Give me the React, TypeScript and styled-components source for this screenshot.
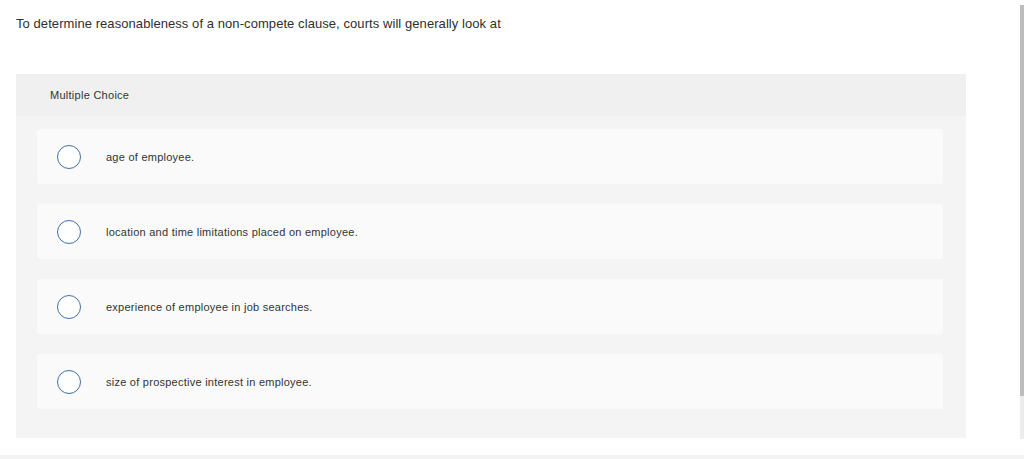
import React from "react";
import styled, { createGlobalStyle } from "styled-components";

const GlobalStyle = createGlobalStyle`
  html, body {
    margin: 0;
    padding: 0;
    background: #ffffff;
    font-family: "Liberation Sans", Arial, sans-serif;
    color: #333333;
  }
`;

const options = [
  "age of employee.",
  "location and time limitations placed on employee.",
  "experience of employee in job searches.",
  "size of prospective interest in employee.",
];

const App: React.FC = () => {
  return (
    <>
      <GlobalStyle />
      <Page>
        <Question>To determine reasonableness of a non-compete clause, courts will generally look at</Question>
        <Panel>
          <PanelHeader>Multiple Choice</PanelHeader>
          <OptionList>
            {options.map((text) => (
              <OptionCard key={text}>
                <Radio />
                <OptionText>{text}</OptionText>
              </OptionCard>
            ))}
          </OptionList>
        </Panel>
      </Page>
      <BottomEdge />
      <ScrollTrack>
        <ScrollThumb />
      </ScrollTrack>
    </>
  );
};

const Page = styled.div`
  width: 1024px;
  height: 455px;
  box-sizing: border-box;
  padding: 15px 0 0 16px;
`;

const Question = styled.div`
  font-size: 13px;
  line-height: 18px;
  letter-spacing: 0.07px;
  color: #2f2f2f;
  margin-bottom: 41px;
`;

const Panel = styled.div`
  width: 950px;
  background-color: #f4f4f4;
`;

const PanelHeader = styled.div`
  height: 42px;
  display: flex;
  align-items: center;
  padding-left: 34px;
  background-color: #f0f0f0;
  font-size: 11px;
  letter-spacing: 0.27px;
  color: #333333;
`;

const OptionList = styled.div`
  display: flex;
  flex-direction: column;
  gap: 20px;
  padding: 13px 23px 29px 21px;
`;

const OptionCard = styled.div`
  height: 55px;
  display: flex;
  align-items: center;
  gap: 25px;
  padding-left: 20px;
  background-color: #fafafa;
  border-radius: 3px;
`;

const Radio = styled.span`
  width: 24px;
  height: 24px;
  box-sizing: border-box;
  border: 1.5px solid #3d6fa6;
  border-radius: 50%;
  background: #ffffff;
  flex-shrink: 0;
`;

const OptionText = styled.span`
  font-size: 11px;
  letter-spacing: 0.25px;
  color: #333333;
`;

const BottomEdge = styled.div`
  height: 4px;
  width: 1024px;
  background-color: #f3f3f3;
`;

const ScrollTrack = styled.div`
  position: fixed;
  top: 5px;
  right: 0;
  width: 4px;
  height: 434px;
  background-color: #ececec;
`;

const ScrollThumb = styled.div`
  height: 391px;
  background-color: #bdbdbd;
`;

export default App;
